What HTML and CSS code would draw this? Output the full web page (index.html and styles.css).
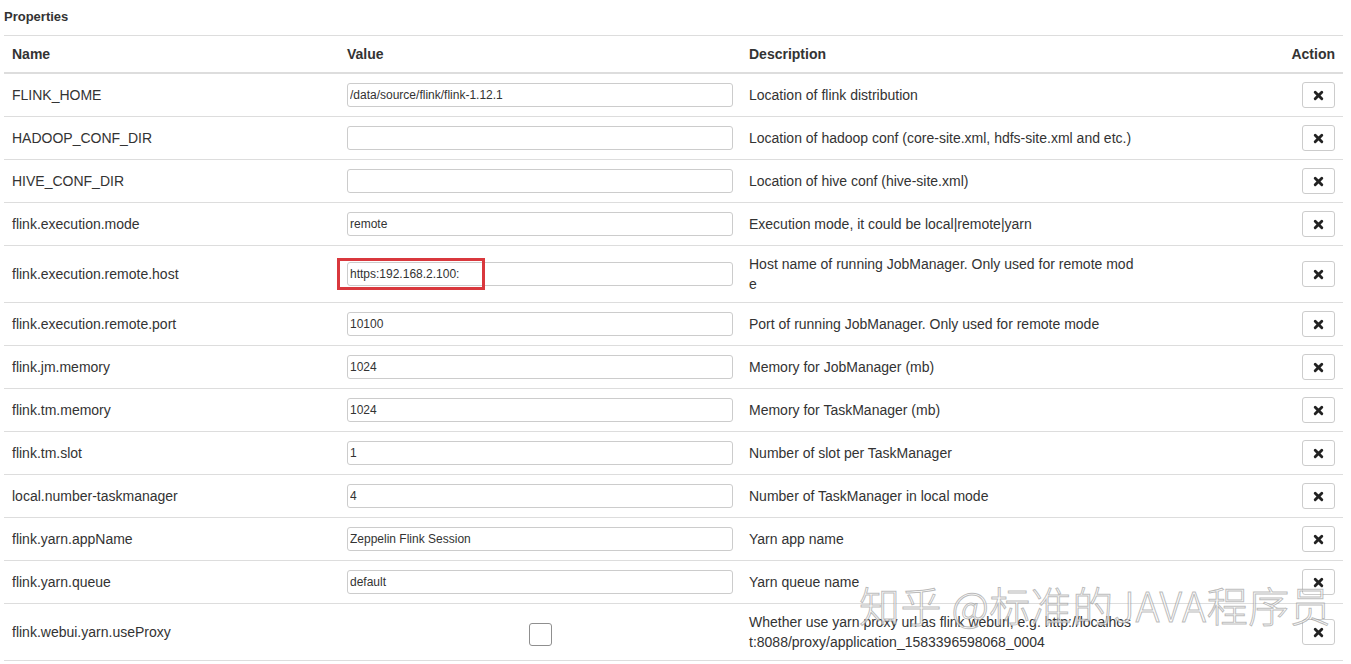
FILE: index.html
```html
<!DOCTYPE HTML>
<html>
  <head>
    <title>Interpreter Properties</title>
    <meta charset="utf-8" />
    <link rel="stylesheet" href="styles.css">
  </head>
  <body>
    <div class="page">
      <h5 class="title">Properties</h5>
      <table class="props">
        <colgroup>
          <col class="c-name"><col class="c-value"><col class="c-desc"><col class="c-action">
        </colgroup>
        <thead>
          <tr><th>Name</th><th>Value</th><th>Description</th><th class="act">Action</th></tr>
        </thead>
        <tbody>
          <tr>
            <td>FLINK_HOME</td>
            <td><input class="val" type="text" value="/data/source/flink/flink-1.12.1"></td>
            <td class="desc">Location of flink distribution</td>
            <td class="act"><button class="del"><svg viewBox="0 0 10 10"><path d="M2 2L8 8M8 2L2 8"/></svg></button></td>
          </tr>
          <tr>
            <td>HADOOP_CONF_DIR</td>
            <td><input class="val" type="text" value=""></td>
            <td class="desc">Location of hadoop conf (core-site.xml, hdfs-site.xml and etc.)</td>
            <td class="act"><button class="del"><svg viewBox="0 0 10 10"><path d="M2 2L8 8M8 2L2 8"/></svg></button></td>
          </tr>
          <tr>
            <td>HIVE_CONF_DIR</td>
            <td><input class="val" type="text" value=""></td>
            <td class="desc">Location of hive conf (hive-site.xml)</td>
            <td class="act"><button class="del"><svg viewBox="0 0 10 10"><path d="M2 2L8 8M8 2L2 8"/></svg></button></td>
          </tr>
          <tr>
            <td>flink.execution.mode</td>
            <td><input class="val" type="text" value="remote"></td>
            <td class="desc">Execution mode, it could be local|remote|yarn</td>
            <td class="act"><button class="del"><svg viewBox="0 0 10 10"><path d="M2 2L8 8M8 2L2 8"/></svg></button></td>
          </tr>
          <tr>
            <td>flink.execution.remote.host</td>
            <td class="mark-cell"><input class="val" type="text" value="https:192.168.2.100:"><span class="mark"></span></td>
            <td class="desc">Host name of running JobManager. Only used for remote mode</td>
            <td class="act"><button class="del"><svg viewBox="0 0 10 10"><path d="M2 2L8 8M8 2L2 8"/></svg></button></td>
          </tr>
          <tr>
            <td>flink.execution.remote.port</td>
            <td><input class="val" type="text" value="10100"></td>
            <td class="desc">Port of running JobManager. Only used for remote mode</td>
            <td class="act"><button class="del"><svg viewBox="0 0 10 10"><path d="M2 2L8 8M8 2L2 8"/></svg></button></td>
          </tr>
          <tr>
            <td>flink.jm.memory</td>
            <td><input class="val" type="text" value="1024"></td>
            <td class="desc">Memory for JobManager (mb)</td>
            <td class="act"><button class="del"><svg viewBox="0 0 10 10"><path d="M2 2L8 8M8 2L2 8"/></svg></button></td>
          </tr>
          <tr>
            <td>flink.tm.memory</td>
            <td><input class="val" type="text" value="1024"></td>
            <td class="desc">Memory for TaskManager (mb)</td>
            <td class="act"><button class="del"><svg viewBox="0 0 10 10"><path d="M2 2L8 8M8 2L2 8"/></svg></button></td>
          </tr>
          <tr>
            <td>flink.tm.slot</td>
            <td><input class="val" type="text" value="1"></td>
            <td class="desc">Number of slot per TaskManager</td>
            <td class="act"><button class="del"><svg viewBox="0 0 10 10"><path d="M2 2L8 8M8 2L2 8"/></svg></button></td>
          </tr>
          <tr>
            <td>local.number-taskmanager</td>
            <td><input class="val" type="text" value="4"></td>
            <td class="desc">Number of TaskManager in local mode</td>
            <td class="act"><button class="del"><svg viewBox="0 0 10 10"><path d="M2 2L8 8M8 2L2 8"/></svg></button></td>
          </tr>
          <tr>
            <td>flink.yarn.appName</td>
            <td><input class="val" type="text" value="Zeppelin Flink Session"></td>
            <td class="desc">Yarn app name</td>
            <td class="act"><button class="del"><svg viewBox="0 0 10 10"><path d="M2 2L8 8M8 2L2 8"/></svg></button></td>
          </tr>
          <tr>
            <td>flink.yarn.queue</td>
            <td><input class="val" type="text" value="default"></td>
            <td class="desc">Yarn queue name</td>
            <td class="act"><button class="del"><svg viewBox="0 0 10 10"><path d="M2 2L8 8M8 2L2 8"/></svg></button></td>
          </tr>
          <tr>
            <td>flink.webui.yarn.useProxy</td>
            <td class="center"><span class="check"></span></td>
            <td class="desc">Whether use yarn proxy url as flink weburl, e.g. http://localhost:8088/proxy/application_1583396598068_0004</td>
            <td class="act"><button class="del"><svg viewBox="0 0 10 10"><path d="M2 2L8 8M8 2L2 8"/></svg></button></td>
          </tr>
        </tbody>
      </table>
    </div>
    <div class="watermark">知乎 @标准的JAVA程序员</div>
  </body>
</html>
```

FILE: styles.css
```css
*{
  margin: 0;
  padding: 0;
  box-sizing: border-box;
}
body{
  font-family: "Liberation Sans", Arial, sans-serif;
  font-size: 14px;
  line-height: 20px;
  color: #333;
  background: #fff;
}
.page{
  padding: 0 8px 0 4px;
}
.title{
  font-size: 13px;
  font-weight: bold;
  line-height: 20px;
  padding: 7px 0 8px;
}
.props{
  width: 100%;
  border-collapse: collapse;
  table-layout: fixed;
}
.c-name{ width: 335px; }
.c-value{ width: 402px; }
.c-desc{ width: 402px; }
.props th,.props td{
  padding: 8px;
  text-align: left;
  vertical-align: middle;
  border-top: 1px solid #ddd;
}
.props th{
  font-weight: bold;
  border-bottom: 2px solid #ddd;
}
.props tbody tr:first-child td{
  border-top: 0;
}
.props tbody tr:last-child td{
  border-bottom: 1px solid #ddd;
}
.props .act{
  text-align: right;
}
.props .center{
  text-align: center;
}
.desc{
  word-break: break-all;
}
.val{
  display: block;
  width: 100%;
  height: 24px;
  padding: 0 2px;
  font-family: "Liberation Sans", Arial, sans-serif;
  font-size: 12px;
  color: #333;
  border: 1px solid #ccc;
  border-radius: 3px;
  background: #fff;
}
.mark-cell{
  position: relative;
}
.mark{
  position: absolute;
  left: -2px;
  top: 12px;
  width: 148px;
  height: 32px;
  border: 3px solid #d9383d;
}
.check{
  display: inline-block;
  width: 23px;
  height: 23px;
  margin-top: 4px;
  border: 1px solid #8f8f8f;
  border-radius: 3px;
  vertical-align: middle;
}
.del{
  display: inline-block;
  width: 33px;
  height: 26px;
  border: 1px solid #ccc;
  border-radius: 3px;
  background: #fff;
  vertical-align: middle;
}
.del svg{
  display: block;
  width: 11px;
  height: 11px;
  margin: 0 auto;
}
.del path{
  stroke: #222;
  stroke-width: 2.6;
  stroke-linecap: round;
  fill: none;
}
.watermark{
  position: absolute;
  left: 859px;
  top: 580px;
  font-family: "Noto Sans CJK SC", sans-serif;
  font-weight: 300;
  font-size: 41px;
  line-height: 48px;
  letter-spacing: 0.5px;
  color: rgba(255,255,255,0.7);
  -webkit-text-stroke: 1px rgba(120,120,120,0.5);
  white-space: nowrap;
  pointer-events: none;
}
```
